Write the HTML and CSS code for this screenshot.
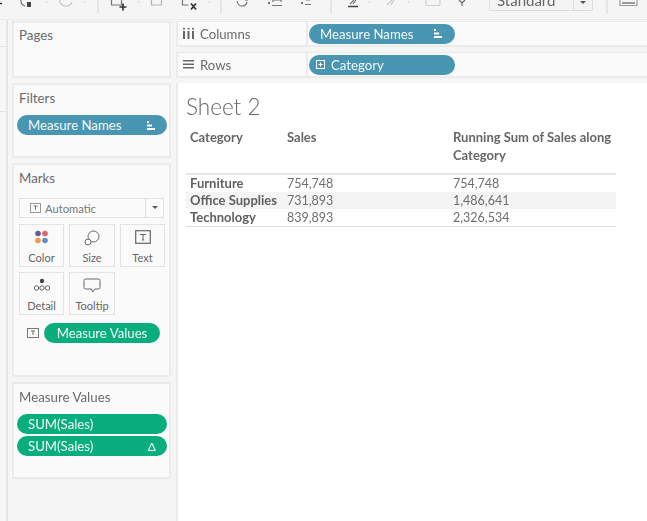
FILE: index.html
```html
<!DOCTYPE html>
<html lang="en">
<head>
<meta charset="utf-8">
<title>Sheet 2</title>
<link rel="stylesheet" href="styles.css">
</head>
<body>
<div class="app">
  <header class="toolbar">
    <svg class="tb-icons" width="647" height="20" viewBox="0 0 647 20" fill="none" stroke="#777" stroke-width="1.200">
      <path d="M0 3.500h2" stroke="#333" stroke-width="1.500"/>
      <path d="M21 0v1q0 4 4 5"/><path d="M27 2h4v5h-4z" fill="#444" stroke="none"/>
      <path d="M46 2h1M84 2h1" stroke="#bbb"/>
      <path d="M60 0a6 5 0 0 0 12 2" stroke="#c4c4c4"/>
      <path d="M111.500 0v5h10V0"/><path d="M123 3.500v7M119.500 7h7" stroke="#333" stroke-width="1.700"/>
      <path d="M138 2h1M209 2h1" stroke="#bbb"/>
      <path d="M151.500 0v5h10V0" stroke="#b4b4b4"/>
      <path d="M182.500 0v5h6"/><path d="M191 3.500l5 6M196 3.500l-5 6" stroke="#333" stroke-width="1.700"/>
      <path d="M237 1q1 5 5 5 4 0 5-4" /><path d="M245 0h3" />
      <path d="M268 3h2" stroke="#444" stroke-width="1.500"/><path d="M272 5.500h10M273 2V0h8v2"/>
      <path d="M301 3h2" stroke="#444" stroke-width="1.500"/><path d="M305 4.500h6M306 0h4"/>
      <path d="M348 6.500h10" stroke="#444" stroke-width="1.500"/><path d="M350 4l4-4M353 4l3-4" stroke="#777"/>
      <path d="M369 2h1M408 2h1" stroke="#bbb"/>
      <path d="M387 5l5-5M391 5l3-5" stroke="#c8c8c8"/>
      <path d="M426 5.500h14M426 0v5M440 0v5" stroke="#d0d0d0"/>
      <path d="M459 0l3 3 3-3M462 3v3" stroke="#666"/>
      <path d="M620 0v5.500h17V0" stroke="#999"/><path d="M622 3h13" stroke="#999" stroke-width="2"/>
      <g stroke="#dcdcdc"><path d="M98 0v14M221 0v14M331 0v14M607 0v14"/></g>
    </svg>
    <div class="combo"><span class="combo-text">Standard</span><span class="combo-arrow"></span></div>
  </header>
  <div class="workspace">
    <div class="strip"><div class="strip-row"></div><div class="strip-row tall"></div></div>
    <aside class="side">
      <section class="card card-pages"><h2>Pages</h2></section>
      <section class="card card-filters">
        <h2>Filters</h2>
        <div class="pill blue wide">
          <span>Measure Names</span>
          <svg class="sort" width="10" height="9" viewBox="0 0 10 9"><path d="M1 0h2v2H1zM1 3.500h5v2H1zM1 7h8v2H1z" fill="#fff"/></svg>
        </div>
      </section>
      <section class="card card-marks">
        <h2>Marks</h2>
        <div class="mark-type">
          <svg class="t-box" width="11" height="10" viewBox="0 0 11 10"><rect x=".5" y=".5" width="10" height="9" fill="none" stroke="#999"/><path d="M3.500 3h4M5.500 3v4" stroke="#777"/></svg>
          <span class="mark-label">Automatic</span>
          <span class="mark-drop"></span>
        </div>
        <div class="mark-grid">
          <div class="mark-btn">
            <svg width="16" height="14" viewBox="0 0 16 14"><circle cx="4" cy="3.500" r="2.800" fill="#6a5a8c"/><circle cx="11" cy="3.500" r="2.800" fill="#e0606e"/><circle cx="4" cy="10.500" r="2.800" fill="#ef9a4c"/><circle cx="11" cy="10.500" r="2.800" fill="#5f8fc4"/></svg>
            <span>Color</span>
          </div>
          <div class="mark-btn">
            <svg width="18" height="16" viewBox="0 0 18 16" fill="none" stroke="#666"><circle cx="10.500" cy="6.500" r="5.500"/><circle cx="5" cy="12" r="3" fill="#fafafa"/></svg>
            <span>Size</span>
          </div>
          <div class="mark-btn">
            <svg width="16" height="15" viewBox="0 0 16 15"><rect x=".7" y=".7" width="14.600" height="12.600" fill="none" stroke="#666" stroke-width="1.200"/><path d="M5 4.500h6M8 4.500v5.500M6.800 10h2.400" stroke="#666" fill="none"/></svg>
            <span>Text</span>
          </div>
          <div class="mark-btn">
            <svg width="18" height="14" viewBox="0 0 18 14" fill="none" stroke="#666"><circle cx="9" cy="3" r="2.200" fill="#444" stroke="none"/><circle cx="3.500" cy="10" r="2.200"/><circle cx="9" cy="10" r="2.200"/><circle cx="14.500" cy="10" r="2.200"/></svg>
            <span>Detail</span>
          </div>
          <div class="mark-btn">
            <svg width="18" height="15" viewBox="0 0 18 15" fill="none" stroke="#666"><path d="M2.500 1h13q1.500 0 1.500 1.500v7q0 1.500-1.500 1.500H12l-2.500 3-1-3h-6Q1 11 1 9.500v-7Q1 1 2.500 1z"/></svg>
            <span>Tooltip</span>
          </div>
        </div>
        <div class="mark-row">
          <svg width="12" height="10" viewBox="0 0 12 10"><rect x=".5" y=".5" width="11" height="9" fill="none" stroke="#777"/><path d="M4 3h4M6 3v4" stroke="#666"/></svg>
          <div class="pill green field"><span>Measure Values</span></div>
        </div>
      </section>
      <section class="card card-values">
        <h2>Measure Values</h2>
        <div class="pill-stack">
          <div class="pill green wide"><span>SUM(Sales)</span></div>
          <div class="pill green wide"><span>SUM(Sales)</span><span class="delta">&#916;</span></div>
        </div>
      </section>
    </aside>
    <main class="main">
      <div class="shelf">
        <div class="shelf-label">
          <svg width="11" height="11" viewBox="0 0 11 11"><path d="M0 0h2v1.500H0zM0 3h2v8H0zM4.500 0h2v1.500h-2zM4.500 3h2v8h-2zM9 0h2v1.500H9zM9 3h2v8H9z" fill="#666"/></svg>
          <span>Columns</span>
        </div>
        <div class="shelf-body">
          <div class="pill blue shelf-pill">
            <span>Measure Names</span>
            <svg class="sort" width="10" height="9" viewBox="0 0 10 9"><path d="M1 0h2v2H1zM1 3.500h5v2H1zM1 7h8v2H1z" fill="#fff"/></svg>
          </div>
        </div>
      </div>
      <div class="shelf">
        <div class="shelf-label">
          <svg width="11" height="9" viewBox="0 0 11 9"><path d="M0 0h11v1.500H0zM0 3.500h11V5H0zM0 7h11v1.500H0z" fill="#666"/></svg>
          <span>Rows</span>
        </div>
        <div class="shelf-body">
          <div class="pill blue shelf-pill start">
            <svg class="plus" width="9" height="9" viewBox="0 0 9 9" fill="none" stroke="#fff"><rect x=".5" y=".5" width="8" height="8"/><path d="M2.500 4.500h4M4.500 2.500v4"/></svg>
            <span>Category</span>
          </div>
        </div>
      </div>
      <section class="view">
        <h1>Sheet 2</h1>
        <table class="crosstab">
          <thead>
            <tr><th class="c1">Category</th><th class="c2">Sales</th><th class="c3">Running Sum of Sales along Category</th></tr>
          </thead>
          <tbody>
            <tr><th>Furniture</th><td>754,748</td><td>754,748</td></tr>
            <tr class="alt"><th>Office Supplies</th><td>731,893</td><td>1,486,641</td></tr>
            <tr><th>Technology</th><td>839,893</td><td>2,326,534</td></tr>
          </tbody>
        </table>
      </section>
    </main>
  </div>
</div>
</body>
</html>
```
FILE: styles.css
```css
* { box-sizing: border-box; }
html, body { margin: 0; height: 100%; }
body { background: #f5f5f5; font-family: Lato, "Open Sans", sans-serif; color: #666; overflow: hidden; }
.app { width: 647px; height: 521px; display: flex; flex-direction: column; filter: blur(0.45px); }

.toolbar { height: 20px; position: relative; overflow: hidden; flex: none; border-bottom: 1px solid #ececec; }
.tb-icons { display: block; }
.combo { position: absolute; left: 489px; top: -8px; width: 104px; height: 19px; background: #f3f3f3; border: 1px solid #ddd; border-radius: 2px; display: flex; align-items: center; font-size: 15px; color: #666; }
.combo-text { flex: 1; padding: 0 0 3px 7px; border-right: 1px solid #ddd; line-height: 15px; height: 100%; }
.combo-arrow { width: 18px; height: 100%; position: relative; }
.combo-arrow::after { content: ""; position: absolute; left: 6px; top: 8px; border: 3px solid transparent; border-top-color: #555; }

.workspace { flex: 1; display: flex; min-height: 0; }
.strip { width: 8px; flex: none; border-right: 2px solid #e6e6e6; background: #f7f7f7; padding-top: 1px; }
.strip-row { height: 26px; border-bottom: 1px solid #e6e6e6; }
.strip-row.tall { height: 65px; }
.side { width: 168px; flex: none; padding: 1px 5px 0 4px; display: flex; flex-direction: column; gap: 5px; border-right: 0; }
.card { background: #fafafa; border: 2px solid #ebebeb; padding: 4px 5px 0 5px; }
.card h2 { margin: 0; font-size: 13.300px; font-weight: 400; line-height: 18px; color: #6a6a6a; padding-left: 0; }
.card-pages { height: 57px; padding-top: 3px; }
.card-filters { height: 75px; }
.card-filters h2 { margin-bottom: 8px; }
.card-filters .pill { margin-left: -2px; }
.card-marks { height: 214px; }
.card-values { height: 97px; }
.card-values h2 { margin-bottom: 8px; }
.pill-stack { display: flex; flex-direction: column; gap: 2px; margin-left: -2px; }

.pill { display: flex; align-items: center; height: 20px; border-radius: 10px; color: #f1f8f8; font-size: 13.200px; white-space: nowrap; }
.pill.blue { background: #4996b2; }
.pill.green { background: #0aae7e; }
.wide { width: 150px; padding: 0 11px; justify-content: space-between; }
.delta { font-size: 12px; }
.sort { flex: none; }

.mark-type { display: flex; align-items: center; height: 20px; margin-top: 11px; background: #fbfbfb; border: 1px solid #e3e3e3; font-size: 11.200px; color: #777; }
.t-box { margin-left: 10px; flex: none; }
.mark-label { flex: 1; margin-left: 4px; }
.mark-drop { width: 18px; height: 100%; border-left: 1px solid #e3e3e3; position: relative; }
.mark-drop::after { content: ""; position: absolute; left: 6px; top: 7px; border: 3px solid transparent; border-top-color: #555; }
.mark-grid { display: grid; grid-template-columns: 45px 46px 45px; grid-auto-rows: 43px; gap: 5px 5px; margin-top: 6px; }
.mark-btn { background: #fafafa; border: 1px solid #e3e3e3; display: flex; flex-direction: column; align-items: center; justify-content: space-between; padding: 5px 0 2px; font-size: 11px; color: #666; }
.mark-row { display: flex; align-items: center; gap: 5px; margin-top: 8px; padding-left: 8px; }
.field { width: 116px; justify-content: center; }

.main { flex: 1; min-width: 0; display: flex; flex-direction: column; gap: 5px; padding-top: 1px; }
.shelf { height: 26px; flex: none; display: flex; background: #fafafa; border-top: 1px solid #ebebeb; border-bottom: 2px solid #ebebeb; border-left: 2px solid #ebebeb; }
.shelf-label { width: 130px; flex: none; display: flex; align-items: center; gap: 6px; padding-left: 5px; font-size: 13.200px; color: #6a6a6a; border-right: 2px solid #ebebeb; }
.shelf-body { flex: 1; display: flex; align-items: center; padding-left: 1px; }
.shelf-pill { width: 146px; padding: 0 12px 0 11px; justify-content: space-between; }
.shelf-pill.start { justify-content: flex-start; gap: 6px; padding-left: 7px; }

.view { flex: 1; background: #fff; border-left: 2px solid #ebebeb; padding: 0 0 0 8px; }
.view h1 { margin: 10px 0 0; font-size: 22.500px; font-weight: 300; line-height: 28px; color: #666; }
.crosstab { border-collapse: collapse; table-layout: fixed; width: 430px; margin-top: 7px; font-size: 13px; color: #666; }
.crosstab th, .crosstab td { text-align: left; padding: 0 0 0 4px; vertical-align: top; line-height: 17px; }
.crosstab th { font-weight: 700; color: #606060; }
.crosstab thead th { padding-top: 0; padding-bottom: 9px; line-height: 18px; font-weight: 700; color: #666; }
.crosstab .c1 { width: 97px; }
.crosstab .c2 { width: 166px; }
.crosstab thead { border-bottom: 2px solid #e6e6e6; }
.crosstab tbody { border-bottom: 1px solid #ddd; }
.crosstab td { font-size: 12.500px; color: #6e6e6e; }
.crosstab .alt { background: #f4f4f4; }
```
